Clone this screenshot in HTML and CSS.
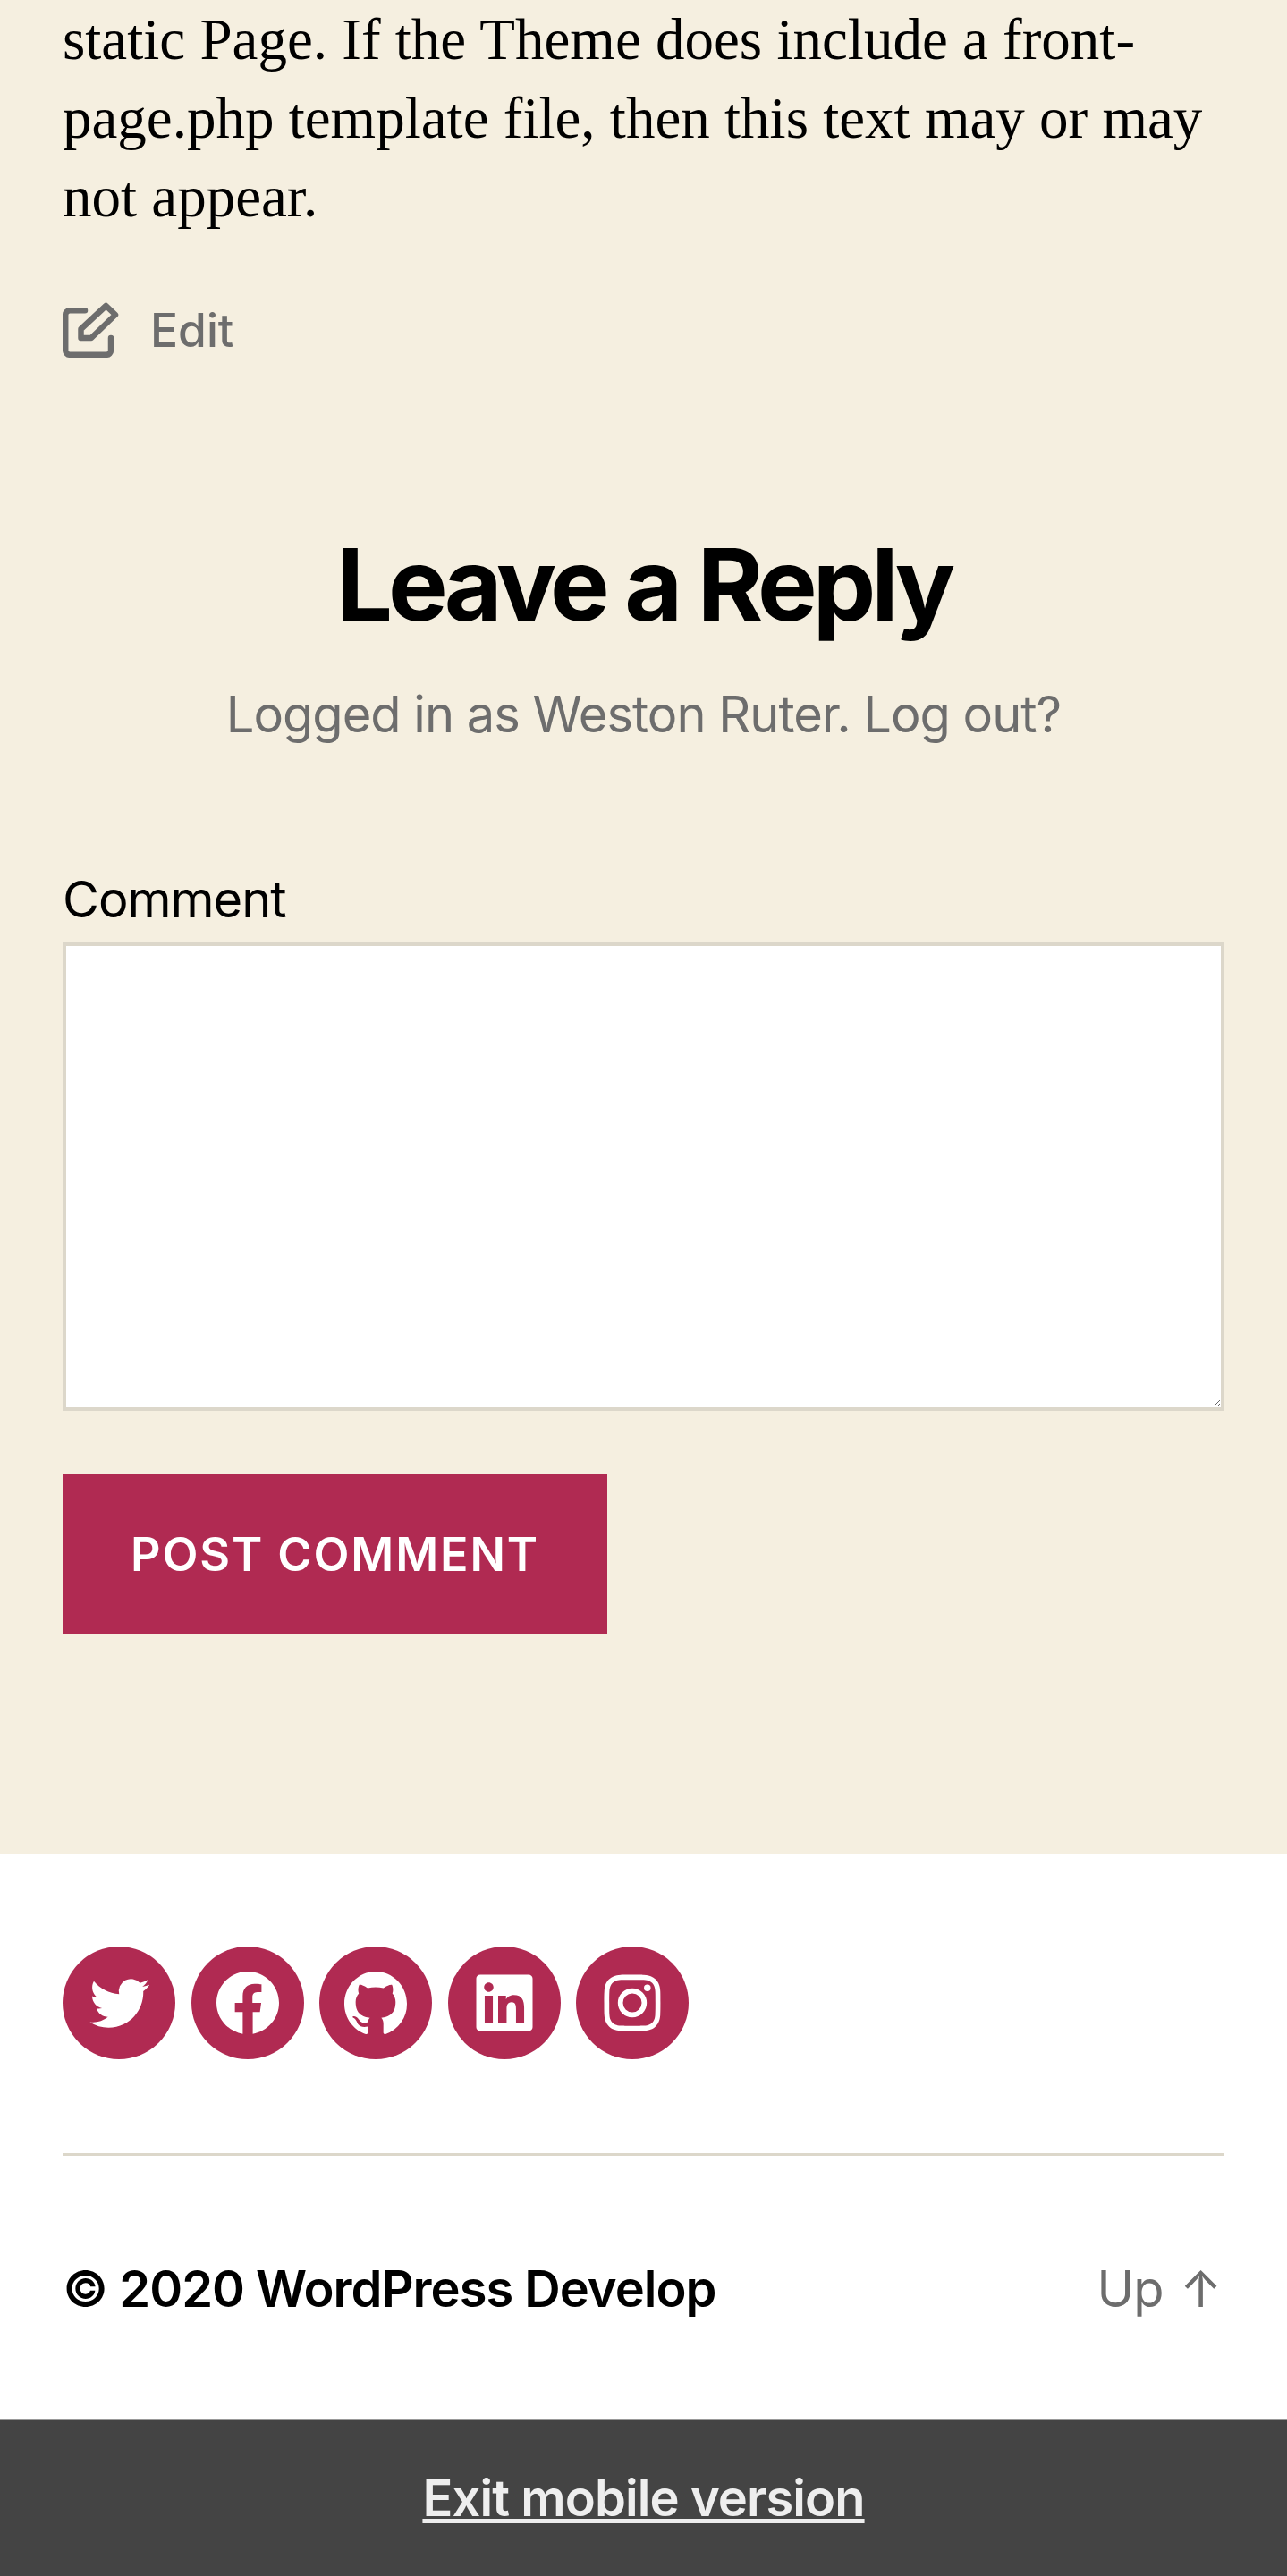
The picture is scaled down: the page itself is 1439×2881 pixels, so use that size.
FILE: index.html
```html
<!DOCTYPE html>
<html lang="en">
<head>
<meta charset="utf-8">
<title>Leave a Reply</title>
<link rel="stylesheet" href="styles.css">
</head>
<body>
<main class="content">
  <p class="entry-text">static Page. If the Theme does include a front-page.php template file, then this text may or may not appear.</p>
  <a class="edit" href="#">
    <svg class="edit-icon" viewBox="0 0 63 62" aria-hidden="true"><path d="M25 9.200H8.200a5 5 0 0 0-5 5v39.600a5 5 0 0 0 5 5H49a5 5 0 0 0 5-5V40"/><path d="M48.500 4L59 14 32 40H20.500V30z"/></svg>
    <span>Edit</span>
  </a>
  <h2 class="reply-title">Leave a Reply</h2>
  <p class="logged-in">Logged in as Weston Ruter. Log out?</p>
  <form class="comment-form">
    <label class="comment-label" for="comment">Comment</label>
    <textarea class="comment-box" id="comment"></textarea>
    <button class="submit" type="button">Post Comment</button>
  </form>
</main>
<footer class="site-footer">
  <ul class="social">
    <li class="social-item"><svg class="icon-twitter" viewBox="0 0 24 24"><path d="M22.23 5.92c-.74.33-1.53.55-2.36.65.85-.51 1.5-1.32 1.81-2.27-.79.47-1.67.81-2.61 1a4.1 4.1 0 0 0-7 3.75C8.66 8.87 5.63 7.24 3.6 4.75c-.35.61-.56 1.32-.56 2.07 0 1.43.72 2.68 1.83 3.42-.67-.02-1.3-.21-1.85-.51v.05c0 2 1.42 3.66 3.3 4.03-.34.1-.71.14-1.08.14-.26 0-.52-.02-.77-.07.53 1.64 2.05 2.83 3.84 2.86a8.24 8.24 0 0 1-6.09 1.7A11.6 11.6 0 0 0 8.5 20.3c7.55 0 11.67-6.25 11.67-11.67l-.01-.53c.8-.58 1.5-1.3 2.05-2.12z"/></svg></li>
    <li class="social-item"><svg viewBox="0 0 24 24"><path d="M12 2C6.5 2 2 6.5 2 12c0 5 3.7 9.1 8.4 9.9v-7H7.900V12h2.500V9.800c0-2.500 1.500-3.900 3.800-3.900 1.100 0 2.200.2 2.200.2v2.500h-1.300c-1.200 0-1.600.8-1.600 1.600V12h2.800l-.4 2.900h-2.300v7C18.300 21.100 22 17 22 12c0-5.500-4.500-10-10-10z"/></svg></li>
    <li class="social-item"><svg viewBox="0 0 24 24"><path d="M12 2C6.48 2 2 6.59 2 12.25c0 4.53 2.87 8.37 6.84 9.73.5.09.68-.22.68-.49l-.01-1.9c-2.78.62-3.37-1.21-3.37-1.21-.45-1.18-1.11-1.5-1.11-1.5-.91-.64.07-.62.07-.62 1 .07 1.53 1.05 1.53 1.05.89 1.57 2.34 1.12 2.91.85.09-.66.35-1.12.63-1.37-2.22-.26-4.56-1.14-4.56-5.06 0-1.12.39-2.03 1.03-2.75-.1-.26-.45-1.3.1-2.71 0 0 .84-.28 2.75 1.05.8-.23 1.65-.34 2.5-.34s1.7.11 2.5.34c1.91-1.33 2.75-1.05 2.75-1.05.55 1.41.2 2.45.1 2.71.64.72 1.03 1.63 1.03 2.75 0 3.93-2.34 4.79-4.57 5.05.36.32.68.94.68 1.9l-.01 2.81c0 .27.18.59.69.49A10.2 10.2 0 0 0 22 12.25C22 6.59 17.52 2 12 2z"/></svg></li>
    <li class="social-item"><svg viewBox="0 0 24 24"><path d="M19.7 3H4.3C3.600 3 3 3.500 3 4.200v15.600c0 .7.6 1.200 1.300 1.200h15.400c.7 0 1.300-.5 1.300-1.200V4.200c0-.7-.6-1.200-1.300-1.200zM8.300 18.300H5.700V9.700h2.600v8.600zM7 8.500c-.8 0-1.500-.7-1.500-1.500S6.200 5.500 7 5.500 8.500 6.200 8.500 7 7.800 8.500 7 8.500zm11.300 9.800h-2.600v-4.200c0-1-.02-2.300-1.400-2.300-1.400 0-1.600 1.100-1.600 2.200v4.300H10V9.700h2.500v1.200c.35-.67 1.200-1.400 2.500-1.400 2.700 0 3.300 1.800 3.300 4.100v4.700z"/></svg></li>
    <li class="social-item"><svg viewBox="0 0 24 24"><path fill-rule="evenodd" d="M12 3c-2.440 0-2.750.01-3.710.05-.96.04-1.610.2-2.180.42-.59.23-1.090.54-1.590 1.040s-.81 1-1.040 1.590c-.22.570-.38 1.220-.42 2.180C3.010 9.250 3 9.560 3 12s.01 2.750.05 3.710c.04.96.2 1.610.42 2.180.23.590.54 1.090 1.040 1.590s1 .81 1.590 1.040c.57.220 1.220.380 2.180.420.960.040 1.270.050 3.710.050s2.750-.010 3.710-.050c.960-.040 1.610-.200 2.180-.420.590-.230 1.090-.540 1.590-1.040s.810-1 1.040-1.590c.220-.570.380-1.220.420-2.180.040-.960.050-1.270.050-3.710s-.010-2.750-.050-3.710c-.040-.960-.200-1.610-.420-2.180-.230-.590-.540-1.090-1.040-1.590s-1-.810-1.590-1.040c-.570-.220-1.220-.380-2.180-.420C14.750 3.010 14.440 3 12 3zm0 1.620c2.400 0 2.690.010 3.640.050.880.040 1.350.190 1.670.310.420.160.720.360 1.030.670.310.310.510.610.670 1.030.120.320.270.790.310 1.670.040.950.050 1.240.050 3.640s-.010 2.690-.050 3.640c-.040.880-.190 1.350-.310 1.670-.160.420-.360.720-.670 1.030-.310.310-.610.510-1.030.670-.320.120-.790.270-1.670.310-.950.040-1.240.050-3.640.050s-2.690-.010-3.640-.050c-.880-.040-1.350-.190-1.670-.310a2.800 2.800 0 0 1-1.030-.670 2.800 2.800 0 0 1-.670-1.030c-.120-.320-.270-.790-.310-1.670-.040-.950-.050-1.240-.050-3.640s.010-2.690.050-3.640c.040-.880.190-1.350.310-1.670.160-.420.360-.720.670-1.030.310-.310.610-.510 1.030-.670.320-.120.790-.270 1.670-.310.950-.040 1.240-.050 3.640-.050zM12 7.380a4.620 4.620 0 1 0 0 9.240 4.620 4.620 0 0 0 0-9.240zM12 15a3 3 0 1 1 0-6 3 3 0 0 1 0 6zm5.880-7.800a1.080 1.080 0 1 1-2.160 0 1.080 1.080 0 0 1 2.160 0z"/></svg></li>
  </ul>
  <hr class="footer-rule">
  <div class="credits">
    <span class="copyright">© 2020 WordPress Develop</span>
    <a class="to-top" href="#">Up <span class="arrow">↑</span></a>
  </div>
</footer>
<div class="amp-bar"><a href="#">Exit mobile version</a></div>
</body>
</html>
```
FILE: styles.css
```css
* { box-sizing: border-box; }
html, body { margin: 0; padding: 0; }
body { width: 1439px; background: #fff; font-family: Inter, "Liberation Sans", sans-serif; color: #000; }
.content { background: #f5efe0; padding: 0 70px; height: 2073px; }
.entry-text { margin: 0; font-family: "Liberation Serif", serif; font-size: 65px; line-height: 88px; }
.edit { display: flex; align-items: center; gap: 35px; margin-top: 74px; color: #6d6d6d; font-size: 51.5px; text-decoration: none; font-weight: 500; }
.edit-icon { width: 63px; height: 62px; fill: none; stroke: #6d6d6d; stroke-width: 6.5; stroke-linecap: round; stroke-linejoin: round; }
.reply-title { margin: 193px 0 0; text-align: center; font-size: 112px; line-height: 120px; font-weight: 700; letter-spacing: -5px; }
.logged-in { margin: 51px 0 0; text-align: center; color: #6d6d6d; font-size: 56px; line-height: 70px; letter-spacing: -1px; }
.comment-form { margin-top: 137px; }
.comment-label { display: block; margin-bottom: 13px; font-size: 56px; line-height: 70px; letter-spacing: -1px; }
.comment-box { display: block; width: 100%; height: 524px; margin: 0; background: #fff; border: 4px solid #dcd7ca; border-radius: 0; }
.submit { display: block; margin-top: 71px; width: 609px; height: 178px; background: #b02a52; color: #fff; border: 0; font-family: Inter, sans-serif; font-size: 52px; font-weight: 600; letter-spacing: 1.9px; text-transform: uppercase; }
.site-footer { padding: 104px 70px 0; height: 632px; }
.social { list-style: none; display: flex; gap: 17.5px; margin: 0; padding: 0; }
.social-item { width: 126px; height: 126px; border-radius: 50%; background: #b02a52; display: flex; align-items: center; justify-content: center; }
.social-item svg { width: 84px; height: 84px; fill: #fff; }
.social-item .icon-twitter { width: 80px; height: 80px; }
.footer-rule { border: 0; height: 3px; background: #dcd7ca; margin: 105px 0 0; }
.credits { display: flex; justify-content: space-between; align-items: center; margin-top: 114px; font-size: 56px; line-height: 70px; letter-spacing: -1px; }
.copyright { font-weight: 600; }
.to-top { color: #6d6d6d; text-decoration: none; padding-right: 4px; }
.arrow { margin-left: 4px; }
.amp-bar { height: 176px; background: #444; border-top: 1px solid #999; display: flex; align-items: center; justify-content: center; }
.amp-bar a { color: #eee; font-size: 56px; font-weight: 600; letter-spacing: -0.9px; text-decoration: underline; }
```
